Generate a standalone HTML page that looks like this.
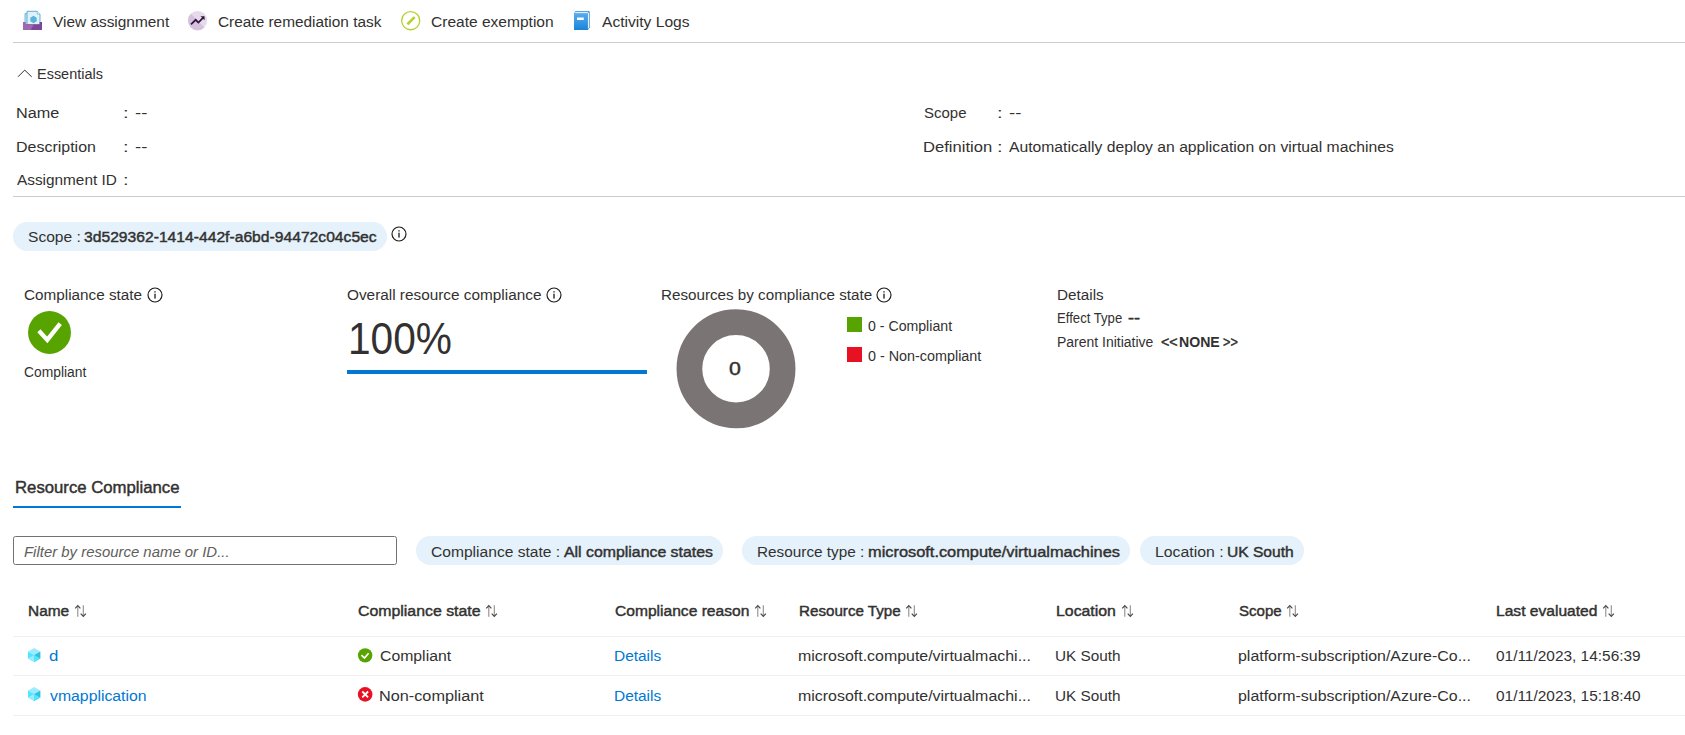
<!DOCTYPE html>
<html lang="en">
<head>
<meta charset="utf-8">
<title>Policy compliance</title>
<style>
html,body{margin:0;padding:0;background:#fff;}
body{width:1685px;height:735px;position:relative;overflow:hidden;font-family:"Liberation Sans",sans-serif;color:#323130;}
.t{position:absolute;white-space:nowrap;line-height:1;transform-origin:0 0;}
.a{position:absolute;}
svg{position:absolute;overflow:visible;}
</style>
</head>
<body>
<!-- command bar -->
<div class="a" style="left:13px;top:42px;width:1672px;height:1px;background:#cdcccb"></div>
<svg style="left:23px;top:11px" width="19" height="19" viewBox="0 0 19 19">
<path d="M2 2.6h11l1.8 1.8V14H2z" fill="#cfe8f4" stroke="#4fa9d3" stroke-width=".8"/>
<path d="M4 .3h10.2L17 3.1V14H4z" fill="#e1f1f9" stroke="#4fa9d3" stroke-width=".9"/>
<path d="M14.2.3v2.8H17" fill="#fff" stroke="#59b4d9" stroke-width=".7"/>
<path d="M10.5 4.8l3.2 1.85v3.7l-3.2 1.85-3.2-1.85v-3.7z" fill="#59b4d9"/>
<path d="M0 11.1h2.4v2.1h14.2v-2.1H19V19H0z" fill="#7e4698"/>
<path d="M0 11.1h2.4v2.1H11L7.6 19H0z" fill="#9b6bae"/>
</svg>
<svg style="left:188px;top:10.9px" width="19.2" height="19.2" viewBox="0 0 19.2 19.2">
<circle cx="9.6" cy="9.6" r="9.6" fill="#e6dbeb"/>
<path d="M2.81 2.81A9.6 9.6 0 0 0 16.39 16.39z" fill="#d5c2dd"/>
<path d="M3 13.300l4.700-4.500 2.700 2.700 4.600-4.600" fill="none" stroke="#32133f" stroke-width="1.7"/>
<path d="M12.600 5.300h4v4z" fill="#32133f"/>
</svg>
<svg style="left:400.8px;top:10.8px" width="19.4" height="19.4" viewBox="0 0 19.4 19.4">
<circle cx="9.7" cy="9.7" r="9.05" fill="none" stroke="#b5d130" stroke-width="1.3"/>
<path d="M6.400 13.200l7.300-7.100" fill="none" stroke="#b5d130" stroke-width="2.600"/>
</svg>
<svg style="left:574px;top:11px" width="16" height="19" viewBox="0 0 16 19">
<defs><linearGradient id="bk" x1="0" y1="0" x2="0" y2="1"><stop offset="0" stop-color="#58abef"/><stop offset="1" stop-color="#1a84d8"/></linearGradient></defs>
<path d="M1.6.1h13.2c.5 0 .9.4.9.900V16.6L13.9 19H0V2.500z" fill="#2f8fdc"/>
<path d="M13.7 2.500l1.300-1.300v15.300L13.700 18z" fill="#e4f0fa"/>
<path d="M.4 2.500L1.800.8h12.600l-0.900 1.700z" fill="#dcecf9"/>
<rect x="0" y="2.500" width="13.700" height="16.500" fill="url(#bk)"/>
<rect x="3" y="6.500" width="6.800" height="2.500" fill="#fff"/>
</svg>
<!-- essentials -->
<svg style="left:17px;top:69px" width="16" height="9" viewBox="0 0 16 9"><path d="M1 7.800L7.700 1.100 14.700 7.800" fill="none" stroke="#323130" stroke-width="1"/></svg>
<div class="a" style="left:13px;top:196px;width:1672px;height:1px;background:#cdcccb"></div>
<!-- scope pill -->
<div class="a" style="left:13px;top:222px;width:374px;height:28.800px;border-radius:14.400px;background:#e5f1fb"></div>
<svg style="left:390.9px;top:226.3px" width="16" height="16" viewBox="0 0 16 16"><circle cx="8" cy="8" r="7" fill="none" stroke="#1b1a19" stroke-width="1.150"/><rect x="7.350" y="4.200" width="1.300" height="1.300" fill="#1b1a19"/><rect x="7.350" y="6.700" width="1.300" height="4.900" fill="#1b1a19"/></svg>
<!-- summary tiles -->
<svg style="left:146.6px;top:287.4px" width="16" height="16" viewBox="0 0 16 16"><circle cx="8" cy="8" r="7" fill="none" stroke="#1b1a19" stroke-width="1.150"/><rect x="7.350" y="4.200" width="1.300" height="1.300" fill="#1b1a19"/><rect x="7.350" y="6.700" width="1.300" height="4.900" fill="#1b1a19"/></svg>
<svg style="left:546px;top:287.4px" width="16" height="16" viewBox="0 0 16 16"><circle cx="8" cy="8" r="7" fill="none" stroke="#1b1a19" stroke-width="1.150"/><rect x="7.350" y="4.200" width="1.300" height="1.300" fill="#1b1a19"/><rect x="7.350" y="6.700" width="1.300" height="4.900" fill="#1b1a19"/></svg>
<svg style="left:876px;top:287.4px" width="16" height="16" viewBox="0 0 16 16"><circle cx="8" cy="8" r="7" fill="none" stroke="#1b1a19" stroke-width="1.150"/><rect x="7.350" y="4.200" width="1.300" height="1.300" fill="#1b1a19"/><rect x="7.350" y="6.700" width="1.300" height="4.900" fill="#1b1a19"/></svg>
<svg style="left:28px;top:311px" width="43" height="43" viewBox="0 0 43 43">
<circle cx="21.500" cy="21.450" r="21.450" fill="#57a300"/>
<path d="M10.900 19.800l8.400 9.100 12.900-16.300" fill="none" stroke="#fff" stroke-width="4.300"/>
</svg>
<div class="a" style="left:347px;top:370px;width:299.500px;height:3.700px;background:#0078d4"></div>
<svg style="left:676px;top:309px" width="120" height="120" viewBox="0 0 120 120"><circle cx="60" cy="59.750" r="46.600" fill="none" stroke="#7a7574" stroke-width="25.700"/></svg>
<div class="a" style="left:847px;top:317px;width:15px;height:15px;background:#57a300"></div>
<div class="a" style="left:847px;top:347px;width:15px;height:14.500px;background:#e81123"></div>
<!-- tab -->
<div class="a" style="left:13px;top:505.500px;width:167.500px;height:2.500px;background:#0078d4"></div>
<!-- filters -->
<div class="a" style="left:13px;top:536px;width:381.500px;height:26.500px;border:1px solid #737170;border-radius:2.500px;background:#fff"></div>
<div class="a" style="left:416px;top:536px;width:306.5px;height:29px;border-radius:14.500px;background:#e5f1fb"></div>
<div class="a" style="left:742px;top:536px;width:388px;height:29px;border-radius:14.500px;background:#e5f1fb"></div>
<div class="a" style="left:1140px;top:536px;width:164px;height:29px;border-radius:14.500px;background:#e5f1fb"></div>
<!-- grid -->
<div class="a" style="left:13px;top:636px;width:1672px;height:1px;background:#f0efee"></div>
<div class="a" style="left:13px;top:675px;width:1672px;height:1px;background:#f0efee"></div>
<div class="a" style="left:13px;top:715px;width:1672px;height:1px;background:#f0efee"></div>
<svg style="left:75px;top:605px" width="12" height="12" viewBox="0 0 12 12"><path d="M2.800 11.800V1M8.300.200v10.800" fill="none" stroke="#8f8d8b" stroke-width="1.100"/><path d="M.200 3.300L2.800.700 5.400 3.300M5.700 8.700l2.600 2.600 2.600-2.600" fill="none" stroke="#484644" stroke-width="1.200"/></svg>
<svg style="left:485.5px;top:605px" width="12" height="12" viewBox="0 0 12 12"><path d="M2.800 11.800V1M8.300.200v10.800" fill="none" stroke="#8f8d8b" stroke-width="1.100"/><path d="M.200 3.300L2.800.700 5.400 3.300M5.700 8.700l2.600 2.600 2.600-2.600" fill="none" stroke="#484644" stroke-width="1.200"/></svg>
<svg style="left:754.5px;top:605px" width="12" height="12" viewBox="0 0 12 12"><path d="M2.800 11.800V1M8.300.200v10.800" fill="none" stroke="#8f8d8b" stroke-width="1.100"/><path d="M.200 3.300L2.800.700 5.400 3.300M5.700 8.700l2.600 2.600 2.600-2.600" fill="none" stroke="#484644" stroke-width="1.200"/></svg>
<svg style="left:905.75px;top:605px" width="12" height="12" viewBox="0 0 12 12"><path d="M2.800 11.800V1M8.300.200v10.800" fill="none" stroke="#8f8d8b" stroke-width="1.100"/><path d="M.200 3.300L2.800.700 5.400 3.300M5.700 8.700l2.600 2.600 2.600-2.600" fill="none" stroke="#484644" stroke-width="1.200"/></svg>
<svg style="left:1121.5px;top:605px" width="12" height="12" viewBox="0 0 12 12"><path d="M2.800 11.800V1M8.300.200v10.800" fill="none" stroke="#8f8d8b" stroke-width="1.100"/><path d="M.200 3.300L2.800.700 5.400 3.300M5.700 8.700l2.600 2.600 2.600-2.600" fill="none" stroke="#484644" stroke-width="1.200"/></svg>
<svg style="left:1287px;top:605px" width="12" height="12" viewBox="0 0 12 12"><path d="M2.800 11.800V1M8.300.200v10.800" fill="none" stroke="#8f8d8b" stroke-width="1.100"/><path d="M.200 3.300L2.800.700 5.400 3.300M5.700 8.700l2.600 2.600 2.600-2.600" fill="none" stroke="#484644" stroke-width="1.200"/></svg>
<svg style="left:1602.5px;top:605px" width="12" height="12" viewBox="0 0 12 12"><path d="M2.800 11.800V1M8.300.200v10.800" fill="none" stroke="#8f8d8b" stroke-width="1.100"/><path d="M.200 3.300L2.800.700 5.400 3.300M5.700 8.700l2.600 2.600 2.600-2.600" fill="none" stroke="#484644" stroke-width="1.200"/></svg>
<svg style="left:27.900000000000002px;top:648.1px" width="12.400" height="14" viewBox="0 0 12.400 14">
<path d="M6.200 0l6.200 3.500L6.200 7 0 3.500z" fill="#9cebff"/>
<path d="M0 3.500L6.200 7v7L0 10.500z" fill="#50e6ff"/>
<path d="M12.400 3.500L6.200 7v7l6.200-3.500z" fill="#32bedd"/>
<path d="M0 10.500l6.200-3.500v7z" fill="#9cebff"/>
<path d="M12.400 10.500L6.200 7v7z" fill="#50e6ff"/>
</svg>
<svg style="left:27.900000000000002px;top:686.9px" width="12.400" height="14" viewBox="0 0 12.400 14">
<path d="M6.200 0l6.200 3.500L6.200 7 0 3.500z" fill="#9cebff"/>
<path d="M0 3.500L6.200 7v7L0 10.500z" fill="#50e6ff"/>
<path d="M12.400 3.500L6.200 7v7l6.200-3.500z" fill="#32bedd"/>
<path d="M0 10.500l6.200-3.500v7z" fill="#9cebff"/>
<path d="M12.400 10.500L6.200 7v7z" fill="#50e6ff"/>
</svg>
<svg style="left:358px;top:648px" width="14.400" height="14.800" viewBox="0 0 14.400 14.800">
<circle cx="7.150" cy="7.400" r="7.200" fill="#57a300"/>
<path d="M3.400 7.200l3.100 2.900 4.100-4.800" fill="none" stroke="#fff" stroke-width="1.700"/>
</svg>
<svg style="left:358px;top:687px" width="14.400" height="14.800" viewBox="0 0 14.400 14.800">
<circle cx="7.150" cy="7.400" r="7.300" fill="#e81123"/>
<path d="M4.300 4.500l5.800 5.800M10.100 4.500l-5.800 5.800" fill="none" stroke="#fff" stroke-width="1.800"/>
</svg>

<span class="t" id="t0" style="left:53.00px;top:14.00px;font-size:15.5px;transform:scaleX(0.9940);">View assignment</span>
<span class="t" id="t1" style="left:218.00px;top:14.00px;font-size:15.5px;transform:scaleX(0.9927);">Create remediation task</span>
<span class="t" id="t2" style="left:431.00px;top:14.00px;font-size:15.5px;transform:scaleX(1.0025);">Create exemption</span>
<span class="t" id="t3" style="left:602.00px;top:14.00px;font-size:15.5px;transform:scaleX(1.0064);">Activity Logs</span>
<span class="t" id="t4" style="left:36.87px;top:66.00px;font-size:15.1px;transform:scaleX(0.9582);">Essentials</span>
<span class="t" id="t5" style="left:15.93px;top:105.00px;font-size:15.5px;transform:scaleX(1.0462);">Name</span>
<span class="t" id="t6" style="left:122.74px;top:105.00px;font-size:15.5px;transform:scaleX(1.3000);">:</span>
<span class="t" id="t7" style="left:134.90px;top:105.00px;font-size:15.5px;transform:scaleX(1.2000);">--</span>
<span class="t" id="t8" style="left:15.95px;top:139.00px;font-size:15.5px;transform:scaleX(1.0307);">Description</span>
<span class="t" id="t9" style="left:122.74px;top:139.00px;font-size:15.5px;transform:scaleX(1.3000);">:</span>
<span class="t" id="t10" style="left:134.90px;top:139.00px;font-size:15.5px;transform:scaleX(1.2000);">--</span>
<span class="t" id="t11" style="left:17.00px;top:172.00px;font-size:15.5px;transform:scaleX(0.9905);">Assignment ID</span>
<span class="t" id="t12" style="left:122.74px;top:172.00px;font-size:15.5px;transform:scaleX(1.3000);">:</span>
<span class="t" id="t13" style="left:923.53px;top:105.00px;font-size:15.5px;transform:scaleX(0.9663);">Scope</span>
<span class="t" id="t14" style="left:996.93px;top:105.00px;font-size:15.5px;transform:scaleX(1.3000);">:</span>
<span class="t" id="t15" style="left:1008.80px;top:105.00px;font-size:15.5px;transform:scaleX(1.2000);">--</span>
<span class="t" id="t16" style="left:922.90px;top:139.00px;font-size:15.5px;transform:scaleX(1.0694);">Definition</span>
<span class="t" id="t17" style="left:996.93px;top:139.00px;font-size:15.5px;transform:scaleX(1.3000);">:</span>
<span class="t" id="t18" style="left:1008.99px;top:139.00px;font-size:15.5px;transform:scaleX(1.0127);">Automatically deploy an application on virtual machines</span>
<span class="t" id="t19" style="left:27.99px;top:229.00px;font-size:15.5px;transform:scaleX(1.0060);">Scope :</span>
<span class="t" id="t20" style="left:84.00px;top:229.00px;font-size:15.5px;-webkit-text-stroke:0.45px;transform:scaleX(1.0106);">3d529362-1414-442f-a6bd-94472c04c5ec</span>
<span class="t" id="t21" style="left:24.01px;top:287.00px;font-size:15.5px;transform:scaleX(0.9857);">Compliance state</span>
<span class="t" id="t22" style="left:24.01px;top:365.01px;font-size:14px;transform:scaleX(0.9889);">Compliant</span>
<span class="t" id="t23" style="left:347.01px;top:287.00px;font-size:15.5px;transform:scaleX(0.9900);">Overall resource compliance</span>
<span class="t" id="t24" style="left:348.24px;top:317.51px;font-size:43.6px;transform:scaleX(0.9327);">100%</span>
<span class="t" id="t25" style="left:661.03px;top:287.00px;font-size:15.5px;transform:scaleX(0.9803);">Resources by compliance state</span>
<span class="t" id="t26" style="left:729.30px;top:358.55px;font-size:19px;-webkit-text-stroke:0.45px;transform:scaleX(1.1222);">0</span>
<span class="t" id="t27" style="left:868.00px;top:319.01px;font-size:14px;transform:scaleX(1.0096);">0 - Compliant</span>
<span class="t" id="t28" style="left:867.99px;top:349.01px;font-size:14px;transform:scaleX(1.0255);">0 - Non-compliant</span>
<span class="t" id="t29" style="left:1057.02px;top:287.00px;font-size:15.5px;transform:scaleX(0.9848);">Details</span>
<span class="t" id="t30" style="left:1057.06px;top:311.01px;font-size:14px;transform:scaleX(0.9382);">Effect Type</span>
<span class="t" id="t31" style="left:1128.28px;top:311.01px;font-size:14px;-webkit-text-stroke:0.45px;transform:scaleX(1.2875);">--</span>
<span class="t" id="t32" style="left:1057.00px;top:335.01px;font-size:14px;transform:scaleX(0.9979);">Parent Initiative</span>
<span class="t" id="t33" style="left:1161.00px;top:335.01px;font-size:14px;-webkit-text-stroke:0.45px;transform:scaleX(1.0187);">&lt;&lt;</span>
<span class="t" id="t34" style="left:1178.99px;top:335.01px;font-size:14px;font-weight:700;transform:scaleX(1.0077);">NONE</span>
<span class="t" id="t35" style="left:1222.78px;top:335.01px;font-size:14px;-webkit-text-stroke:0.45px;transform:scaleX(0.9105);">&gt;&gt;</span>
<span class="t" id="t36" style="left:15.02px;top:479.00px;font-size:17px;-webkit-text-stroke:0.45px;transform:scaleX(0.9836);">Resource Compliance</span>
<span class="t" id="t37" style="left:24.33px;top:544.00px;font-size:15.5px;color:#605e5c;font-style:italic;transform:scaleX(0.9623);">Filter by resource name or ID...</span>
<span class="t" id="t38" style="left:430.99px;top:544.00px;font-size:15.5px;transform:scaleX(1.0063);">Compliance state :</span>
<span class="t" id="t39" style="left:564.00px;top:544.00px;font-size:15.5px;-webkit-text-stroke:0.45px;transform:scaleX(1.0228);">All compliance states</span>
<span class="t" id="t40" style="left:757.02px;top:544.00px;font-size:15.5px;transform:scaleX(0.9887);">Resource type :</span>
<span class="t" id="t41" style="left:867.97px;top:544.00px;font-size:15.5px;-webkit-text-stroke:0.45px;transform:scaleX(1.0559);">microsoft.compute/virtualmachines</span>
<span class="t" id="t42" style="left:1154.98px;top:544.00px;font-size:15.5px;transform:scaleX(1.0200);">Location :</span>
<span class="t" id="t43" style="left:1227.00px;top:544.00px;font-size:15.5px;-webkit-text-stroke:0.45px;transform:scaleX(1.0046);">UK South</span>
<span class="t" id="t44" style="left:28.00px;top:603.00px;font-size:15.5px;-webkit-text-stroke:0.45px;transform:scaleX(0.9951);">Name</span>
<span class="t" id="t45" style="left:357.99px;top:603.00px;font-size:15.5px;-webkit-text-stroke:0.45px;transform:scaleX(1.0235);">Compliance state</span>
<span class="t" id="t46" style="left:615.00px;top:603.00px;font-size:15.5px;-webkit-text-stroke:0.45px;transform:scaleX(1.0060);">Compliance reason</span>
<span class="t" id="t47" style="left:799.01px;top:603.00px;font-size:15.5px;-webkit-text-stroke:0.45px;transform:scaleX(0.9786);">Resource Type</span>
<span class="t" id="t48" style="left:1055.99px;top:603.00px;font-size:15.5px;-webkit-text-stroke:0.45px;transform:scaleX(1.0224);">Location</span>
<span class="t" id="t49" style="left:1239.01px;top:603.00px;font-size:15.5px;-webkit-text-stroke:0.45px;transform:scaleX(0.9721);">Scope</span>
<span class="t" id="t50" style="left:1495.99px;top:603.00px;font-size:15.5px;-webkit-text-stroke:0.45px;transform:scaleX(1.0056);">Last evaluated</span>
<span class="t" id="t51" style="left:48.91px;top:648.00px;font-size:15.5px;color:#0078d4;transform:scaleX(1.0857);">d</span>
<span class="t" id="t52" style="left:50.00px;top:688.00px;font-size:15.5px;color:#0078d4;transform:scaleX(1.0191);">vmapplication</span>
<span class="t" id="t53" style="left:379.99px;top:648.00px;font-size:15.5px;transform:scaleX(1.0188);">Compliant</span>
<span class="t" id="t54" style="left:378.93px;top:688.00px;font-size:15.5px;transform:scaleX(1.0485);">Non-compliant</span>
<span class="t" id="t55" style="left:614.01px;top:648.00px;font-size:15.5px;color:#0078d4;transform:scaleX(0.9957);">Details</span>
<span class="t" id="t56" style="left:797.96px;top:648.00px;font-size:15.5px;transform:scaleX(1.0281);">microsoft.compute/virtualmachi...</span>
<span class="t" id="t57" style="left:1055.02px;top:648.00px;font-size:15.5px;transform:scaleX(0.9891);">UK South</span>
<span class="t" id="t58" style="left:1237.96px;top:648.00px;font-size:15.5px;transform:scaleX(1.0281);">platform-subscription/Azure-Co...</span>
<span class="t" id="t59" style="left:614.01px;top:688.00px;font-size:15.5px;color:#0078d4;transform:scaleX(0.9957);">Details</span>
<span class="t" id="t60" style="left:797.96px;top:688.00px;font-size:15.5px;transform:scaleX(1.0281);">microsoft.compute/virtualmachi...</span>
<span class="t" id="t61" style="left:1055.02px;top:688.00px;font-size:15.5px;transform:scaleX(0.9891);">UK South</span>
<span class="t" id="t62" style="left:1237.96px;top:688.00px;font-size:15.5px;transform:scaleX(1.0281);">platform-subscription/Azure-Co...</span>
<span class="t" id="t63" style="left:1496.00px;top:648.00px;font-size:15.5px;transform:scaleX(0.9951);">01/11/2023, 14:56:39</span>
<span class="t" id="t64" style="left:1496.00px;top:688.00px;font-size:15.5px;transform:scaleX(0.9951);">01/11/2023, 15:18:40</span>
</body>
</html>
